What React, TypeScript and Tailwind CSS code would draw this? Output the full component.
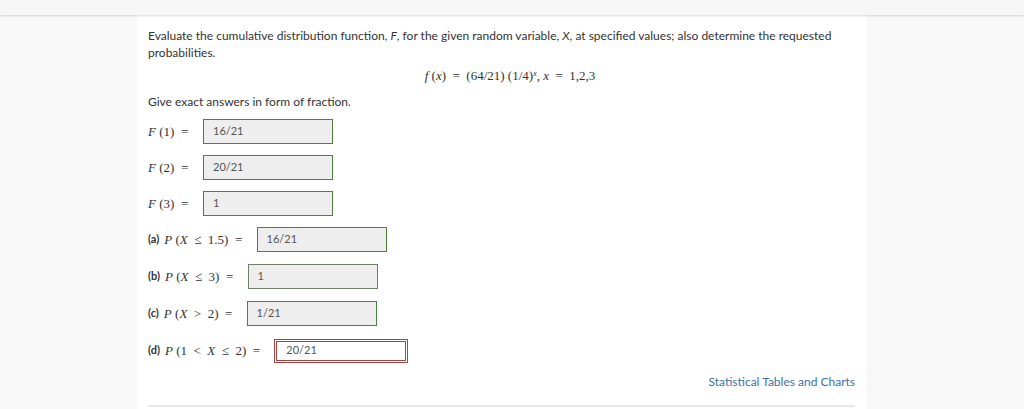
import React from "react";

const serif = { fontFamily: '"Liberation Serif", serif' };

function Box({ value, tone = "green", width = "w-[130px]" }: { value: string; tone?: "green" | "gray" | "red"; width?: string }) {
  if (tone === "red") {
    return (
      <div className={`${width} h-[24px] border border-[#a94442] p-px`}>
        <div className="h-full border border-[#a94442] bg-white flex items-center pl-[9px] text-[11px] text-[#555]">{value}</div>
      </div>
    );
  }
  const border = tone === "green" ? "border-[#4f7f3a]" : "border-[#6f7f68]";
  return (
    <div className={`${width} h-[25px] border ${border} bg-[#eeeeee] flex items-center pl-[9px] text-[11px] text-[#555]`}>
      {value}
    </div>
  );
}

function FRow({ n, value }: { n: number; value: string }) {
  return (
    <div className="flex items-center h-[25px]">
      <span className="w-[55px] text-[13px] text-[#333] whitespace-pre" style={serif}>
        <i>F</i> ({n})  =
      </span>
      <Box value={value} />
    </div>
  );
}

function PRow({ tag, expr, value, tone, width }: { tag: string; expr: React.ReactNode; value: string; tone?: "green" | "gray" | "red"; width?: string }) {
  return (
    <div className="flex items-center h-[25px]">
      <span className="text-[11px] font-bold text-[#333]">{tag}</span>
      <span className="ml-[5px] mr-[11px] text-[13px] text-[#333] whitespace-pre" style={serif}>
        {expr}
      </span>
      <Box value={value} tone={tone} width={width} />
    </div>
  );
}

export default function App() {
  return (
    <div className="w-[1024px] h-[409px] bg-[#f8f8f8] overflow-hidden" style={{ fontFamily: "Lato, sans-serif" }}>
      <div className="h-[15px] bg-[#f6f6f6] shadow-[0_1px_2px_rgba(0,0,0,0.15)] relative z-10" />
      <div className="ml-[137px] w-[729px] h-[394px] bg-white pt-[12px] px-[11px] flex flex-col">
        <p className="text-[12px] leading-[17px] text-[#333] pr-[20px]">
          Evaluate the cumulative distribution function, <i>F</i>, for the given random variable, <i>X</i>, at specified values; also determine the requested probabilities.
        </p>
        <div className="mt-[6px] text-[13px] leading-[17px] text-[#333] text-center pl-[17px] whitespace-pre" style={serif}>
          <i>f</i> (<i>x</i>)  =  (64/21) (1/4)<sup className="text-[8px]"><i>x</i></sup>, <i>x</i>  =  1,2,3
        </div>
        <p className="mt-[9px] text-[12px] leading-[17px] text-[#333]">Give exact answers in form of fraction.</p>
        <div className="mt-[9px] flex flex-col gap-[11px]">
          <FRow n={1} value="16/21" />
          <FRow n={2} value="20/21" />
          <FRow n={3} value="1" />
        </div>
        <div className="mt-[11px] flex flex-col gap-[12px]">
          <PRow tag="(a)" value="16/21" expr={<><i>P</i> (<i>X</i>  ≤  1.5)  = </>} />
          <PRow tag="(b)" value="1" tone="gray" expr={<><i>P</i> (<i>X</i>  ≤  3)  = </>} />
          <PRow tag="(c)" value="1/21" expr={<><i>P</i> (<i>X</i>  &gt;  2)  = </>} />
          <PRow tag="(d)" value="20/21" tone="red" width="w-[134px]" expr={<><i>P</i> (1  &lt;  <i>X</i>  ≤  2)  = </>} />
        </div>
        <div className="mt-auto flex justify-end pb-[14px]">
          <a className="text-[12px] text-[#3a72ad]">Statistical Tables and Charts</a>
        </div>
        <div className="h-[2px] bg-[#e8e8e8] mb-[2px]" />
      </div>
    </div>
  );
}
